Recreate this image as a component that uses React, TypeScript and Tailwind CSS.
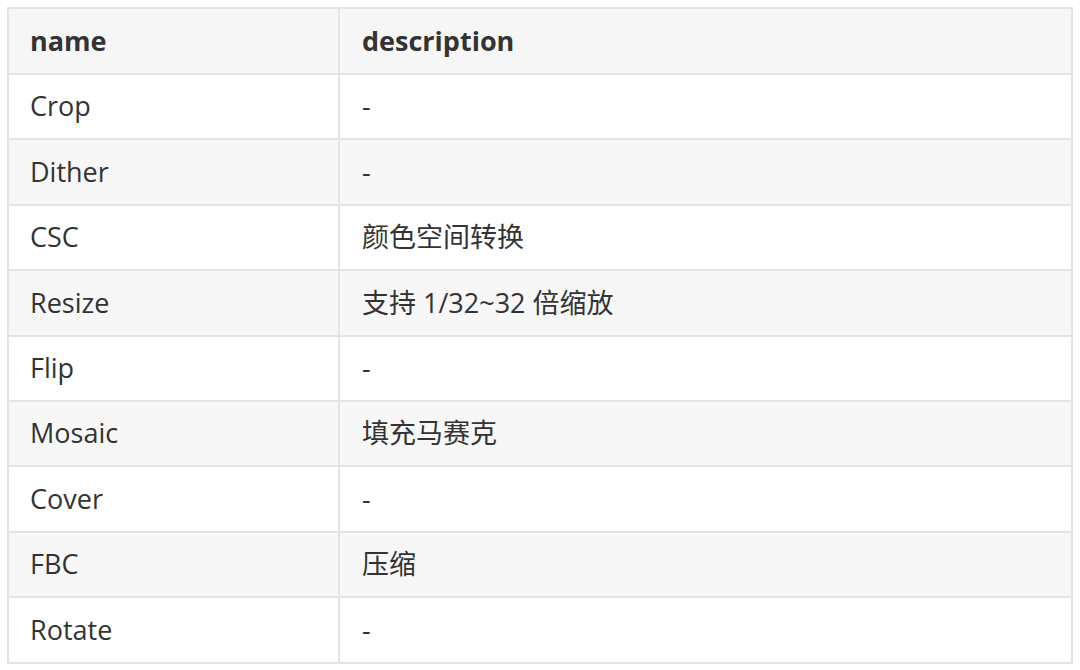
import React from "react";

const rows: [string, string][] = [
  ["Crop", "-"],
  ["Dither", "-"],
  ["CSC", "颜色空间转换"],
  ["Resize", "支持 1/32~32 倍缩放"],
  ["Flip", "-"],
  ["Mosaic", "填充马赛克"],
  ["Cover", "-"],
  ["FBC", "压缩"],
  ["Rotate", "-"],
];

export default function App() {
  return (
    <div
      className="w-[1080px] h-[670px] bg-white pl-[7px] pt-[7px]"
      style={{ fontFamily: '"Open Sans", "Noto Sans CJK SC", sans-serif' }}
    >
      <table className="w-[1066px] border-collapse text-[27px] text-[#333333] table-fixed">
        <colgroup>
          <col className="w-[331px]" />
          <col />
        </colgroup>
        <thead>
          <tr className="h-[66px] bg-[#f6f6f6]">
            <th className="border-2 border-[#e3e3e8] text-left font-bold pl-[21px]">name</th>
            <th className="border-2 border-[#e3e3e8] text-left font-bold pl-[22px]">description</th>
          </tr>
        </thead>
        <tbody>
          {rows.map(([n, d], i) => (
            <tr key={n} className={`h-[65.4px] ${i % 2 === 1 ? "bg-[#f7f7f7]" : "bg-white"}`}>
              <td className="border-2 border-[#e3e3e8] pl-[21px]">{n}</td>
              <td className="border-2 border-[#e3e3e8] pl-[22px]">{d}</td>
            </tr>
          ))}
        </tbody>
      </table>
    </div>
  );
}
